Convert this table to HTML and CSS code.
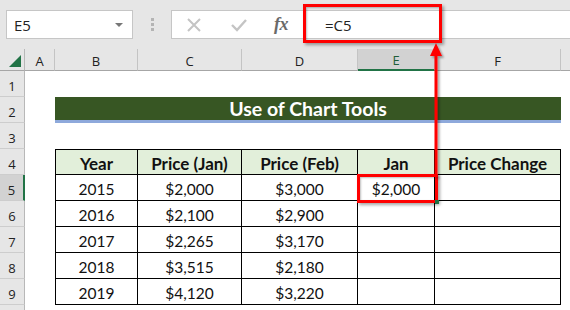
FILE: index.html
```html
<!DOCTYPE html>
<html>
<head>
<meta charset="utf-8">
<link rel="stylesheet" href="styles.css">
</head>
<body>
<div class="app">
  <div class="toolbar">
    <div class="namebox">
      <span class="name">E5</span>
      <span class="caret"></span>
    </div>
    <div class="grip"><i></i><i></i><i></i></div>
    <div class="fbar">
      <div class="ficons">
        <svg class="ic" width="16" height="16" viewBox="0 0 16 16"><path d="M2 2 L14 14 M14 2 L2 14" stroke="#c4c4c4" stroke-width="2" fill="none"/></svg>
        <svg class="ic" width="18" height="16" viewBox="0 0 18 16"><path d="M2 8 L7 13 L16 3" stroke="#c4c4c4" stroke-width="2.4" fill="none"/></svg>
        <span class="fx">fx</span>
      </div>
      <div class="finput">=C5</div>
    </div>
  </div>
  <div class="sheet">
    <div class="corner"><span class="tri"></span></div>
    <div class="ch">A</div>
    <div class="ch">B</div>
    <div class="ch">C</div>
    <div class="ch">D</div>
    <div class="ch sel">E</div>
    <div class="ch">F</div>
    <div class="ch last"></div>

    <div class="rh">1</div><div class="blank row-span"></div>

    <div class="rh">2</div><div class="blank"></div><div class="title">Use of Chart Tools</div><div class="blank"></div>

    <div class="rh">3</div><div class="blank row-span"></div>

    <div class="rh">4</div><div class="blank"></div>
    <div class="tc th first">Year</div><div class="tc th">Price (Jan)</div><div class="tc th">Price (Feb)</div><div class="tc th">Jan</div><div class="tc th">Price Change</div><div class="blank"></div>

    <div class="rh rsel">5</div><div class="blank"></div>
    <div class="tc first">2015</div><div class="tc">$2,000</div><div class="tc">$3,000</div><div class="tc">$2,000</div><div class="tc"></div><div class="blank"></div>

    <div class="rh">6</div><div class="blank"></div>
    <div class="tc first">2016</div><div class="tc">$2,100</div><div class="tc">$2,900</div><div class="tc"></div><div class="tc"></div><div class="blank"></div>

    <div class="rh">7</div><div class="blank"></div>
    <div class="tc first">2017</div><div class="tc">$2,265</div><div class="tc">$3,170</div><div class="tc"></div><div class="tc"></div><div class="blank"></div>

    <div class="rh">8</div><div class="blank"></div>
    <div class="tc first">2018</div><div class="tc">$3,515</div><div class="tc">$2,180</div><div class="tc"></div><div class="tc"></div><div class="blank"></div>

    <div class="rh">9</div><div class="blank"></div>
    <div class="tc first">2019</div><div class="tc">$4,120</div><div class="tc">$3,220</div><div class="tc"></div><div class="tc"></div><div class="blank"></div>

    <div class="rh"></div><div class="blank row-span"></div>
  </div>

  <div class="hl hl-formula"></div>
  <div class="hl hl-cell"></div>
  <span class="handle"></span>
  <svg class="arrow" width="20" height="140" viewBox="0 0 20 140">
    <defs>
      <filter id="sh" x="-50%" y="-10%" width="200%" height="120%">
        <feDropShadow dx="2" dy="2" stdDeviation="1.2" flood-color="#000" flood-opacity="0.35"/>
      </filter>
    </defs>
    <g filter="url(#sh)">
      <rect x="7.5" y="10" width="3" height="124" fill="#ff0000"/>
      <polygon points="9,0 15,13 3,13" fill="#ff0000"/>
    </g>
  </svg>
</div>
</body>
</html>
```
FILE: styles.css
```css
* { box-sizing: border-box; }
html, body { margin: 0; padding: 0; }
body {
  width: 570px;
  height: 310px;
  overflow: hidden;
  background: #ffffff;
  font-family: "Lato", "Open Sans", sans-serif;
}
.app {
  position: relative;
  width: 570px;
  height: 310px;
  overflow: hidden;
}
.toolbar {
  height: 49px;
  background: #e6e6e6;
  display: flex;
  align-items: flex-start;
  padding: 10px 0 0 6px;
}
.namebox {
  width: 127px;
  height: 29px;
  background: #fff;
  border: 1px solid #c6c6c6;
  display: flex;
  align-items: center;
  justify-content: space-between;
  padding: 0 9px 0 7px;
}
.name {
  font-family: "Open Sans", sans-serif;
  font-size: 15px;
  color: #222;
}
.caret {
  width: 0; height: 0;
  border-left: 4px solid transparent;
  border-right: 4px solid transparent;
  border-top: 4px solid #777;
}
.grip {
  width: 38px;
  height: 29px;
  display: flex;
  flex-direction: column;
  align-items: center;
  justify-content: center;
  gap: 2px;
}
.grip i {
  display: block;
  width: 3px; height: 3px;
  background: #b4b4b4;
}
.fbar {
  flex: 1;
  height: 29px;
  display: flex;
  background: #fff;
  border: 1px solid #c6c6c6;
  border-right: none;
}
.ficons {
  width: 132px;
  display: flex;
  align-items: center;
  padding-left: 14px;
}
.ficons .ic:first-child { margin-right: 28px; }
.ficons .ic:nth-child(2) { margin-right: 26px; }
.fx {
  font-family: "Liberation Serif", serif;
  font-style: italic;
  font-weight: 700;
  font-size: 18px;
  color: #6a6a6a;
  letter-spacing: -0.5px;
}
.finput {
  flex: 1;
  display: flex;
  align-items: center;
  padding-left: 21px;
  font-family: "Open Sans", sans-serif;
  font-size: 15px;
  color: #222;
}

.sheet {
  display: grid;
  grid-template-columns: 25px 30px 83px 104px 116px 77px 126px 9px;
  grid-template-rows: 22px repeat(10, 26px);
}
.corner {
  background: #e6e6e6;
  border-right: 1px solid #b8b8b8;
  border-bottom: 1px solid #a6a6a6;
  position: relative;
}
.tri {
  position: absolute;
  right: 3px;
  bottom: 3px;
  width: 0; height: 0;
  border-left: 12px solid transparent;
  border-bottom: 12px solid #217346;
}
.ch {
  background: #e6e6e6;
  border-right: 1px solid #c4c4c4;
  border-bottom: 1px solid #a6a6a6;
  display: flex;
  align-items: center;
  justify-content: center;
  font-family: "Open Sans", sans-serif;
  font-size: 13px;
  color: #222;
  padding-top: 2px;
}
.ch.sel {
  background: #d2d2d2;
  color: #1e5e3a;
  border-bottom: 2px solid #217346;
}
.ch.last { border-right: none; }
.rh {
  grid-column: 1;
  background: #e6e6e6;
  border-right: 1px solid #b8b8b8;
  border-bottom: 1px solid #cdcdcd;
  display: flex;
  align-items: center;
  justify-content: center;
  font-family: "Open Sans", sans-serif;
  font-size: 13px;
  color: #222;
  padding-top: 4px;
}
.rh.rsel {
  background: #d2d2d2;
  border-right: 2px solid #217346;
}
.blank { background: #fff; }
.row-span { grid-column: 2 / -1; }
.title {
  grid-column: 3 / 8;
  background: #375623;
  border-bottom: 3px solid #8ea9db;
  color: #fff;
  font-weight: 700;
  font-size: 19.5px;
  display: flex;
  align-items: center;
  justify-content: center;
  padding-bottom: 1px;
}
.tc {
  border-right: 1px solid #000;
  border-bottom: 1px solid #000;
  display: flex;
  align-items: center;
  justify-content: center;
  font-size: 15.5px;
  color: #111;
  padding-top: 2px;
}
.tc.first { border-left: 1px solid #000; }
.tc.th {
  background: #e2efda;
  border-top: 1px solid #000;
  font-weight: 700;
  font-size: 17px;
}

.hl {
  position: absolute;
  border: 3px solid #ff0000;
  box-shadow: 2px 2px 3px rgba(0,0,0,0.35), inset 1px 1px 2px rgba(0,0,0,0.25);
}
.hl-formula { left: 303px; top: 4px; width: 139px; height: 39px; }
.hl-cell { left: 357px; top: 174px; width: 81px; height: 29px; }
.handle {
  position: absolute;
  left: 435px; top: 200px;
  width: 4px; height: 4px;
  background: #217346;
}
.arrow {
  position: absolute;
  left: 427px;
  top: 43px;
}
```
